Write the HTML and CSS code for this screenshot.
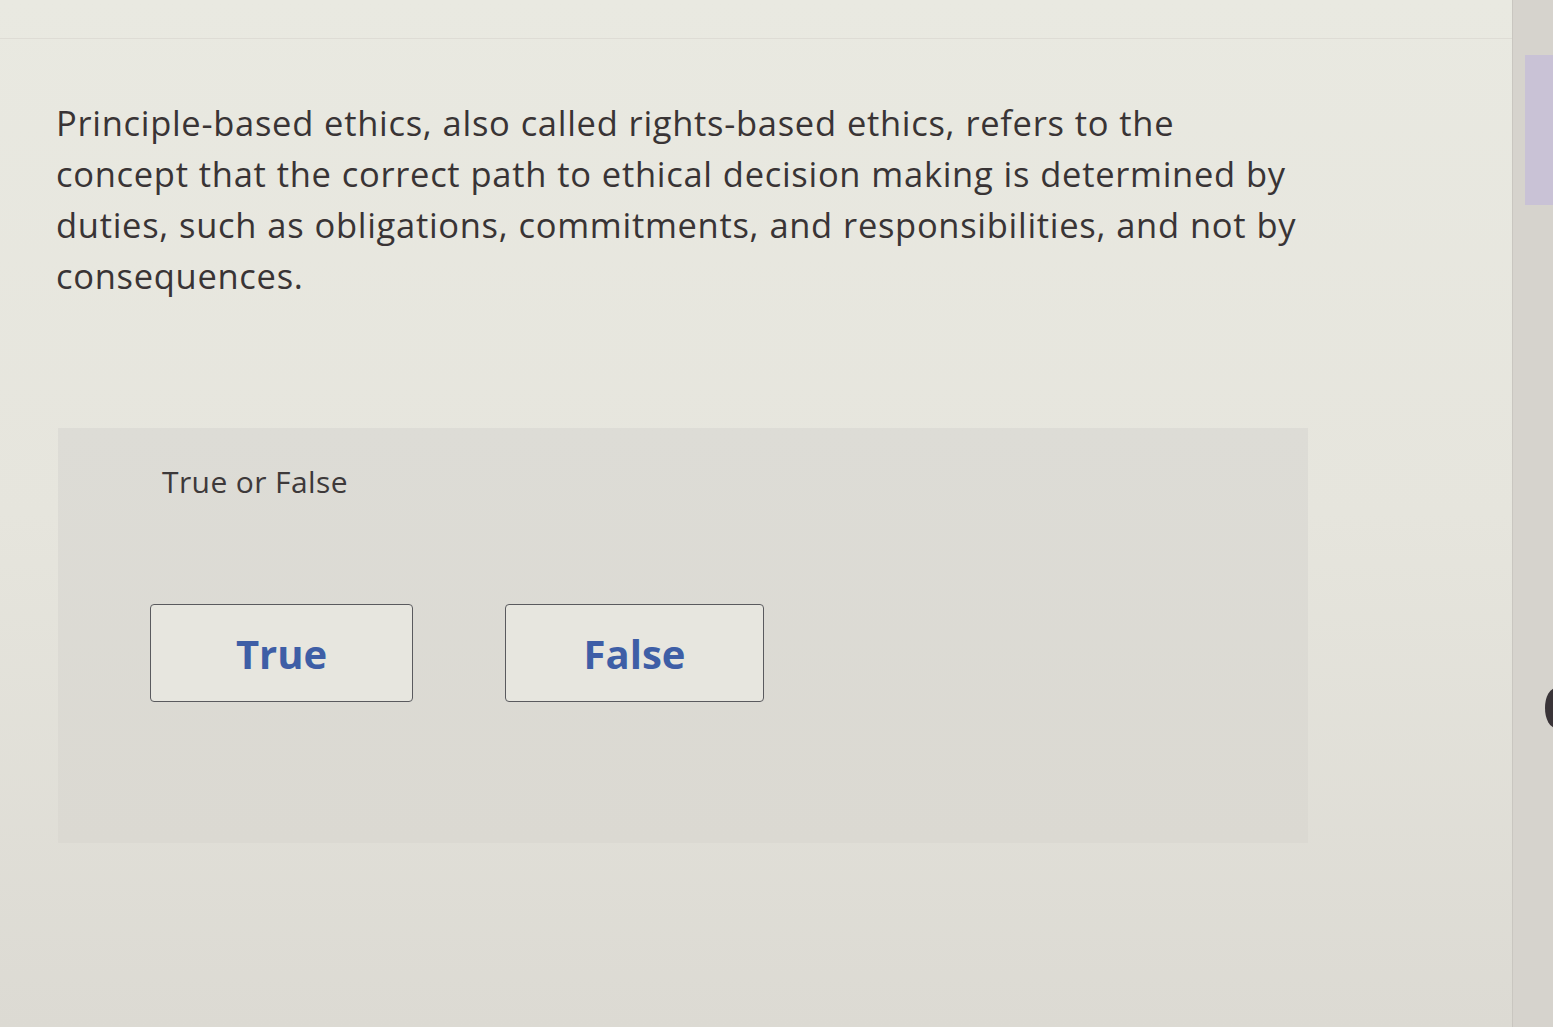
FILE: index.html
```html
<!DOCTYPE html>
<html lang="en">
<head>
<meta charset="utf-8">
<title>True or False</title>
<link rel="stylesheet" href="styles.css">
</head>
<body>
<div class="screen">
  <main class="main">
    <div class="topline"></div>
    <p class="prompt">Principle-based ethics, also called rights-based ethics, refers to the<br>concept that the correct path to ethical decision making is determined by<br>duties, such as obligations, commitments, and responsibilities, and not by<br>consequences.</p>
    <section class="card">
      <div class="card-head">True or False</div>
      <div class="choices">
        <button class="choice">True</button>
        <button class="choice choice-false">False</button>
      </div>
    </section>
  </main>
  <aside class="side">
    <div class="side-band"></div>
    <div class="side-dot"></div>
  </aside>
</div>
</body>
</html>
```
FILE: styles.css
```css
html, body {
  margin: 0;
  padding: 0;
  height: 100%;
}
body {
  background: #e6e5de;
  font-family: "Open Sans", "Liberation Sans", sans-serif;
  overflow: hidden;
}
.screen {
  display: flex;
  height: 1027px;
}
.main {
  width: 1512px;
  background: linear-gradient(180deg, #e9e9e1 0%, #e6e5dd 50%, #dcdad3 100%);
  padding: 0 0 0 56px;
  box-sizing: border-box;
}
.topline {
  height: 38px;
  border-bottom: 1px solid #dedcd5;
  margin-left: -56px;
}
.prompt {
  margin: 58px 0 0 0;
  width: 1300px;
  white-space: nowrap;
  font-size: 34.5px;
  line-height: 51px;
  color: #393435;
  letter-spacing: 0.7px;
  word-spacing: 0.5px;
}
.card {
  margin-top: 127px;
  margin-left: 2px;
  width: 1250px;
  height: 415px;
  background: linear-gradient(180deg, #dddcd6 0%, #dbd9d2 100%);
  display: flex;
  flex-direction: column;
}
.card-head {
  height: 123px;
  box-sizing: border-box;
  padding: 33px 0 0 104px;
  font-size: 30px;
  letter-spacing: 0.4px;
  color: #3d393a;
}
.choices {
  display: flex;
  gap: 92px;
  padding: 53px 0 0 92px;
}
.choice {
  width: 263px;
  height: 98px;
  background: #e7e6df;
  border: 1.5px solid #5a5a5e;
  border-radius: 4px;
  font-family: "Open Sans", "Liberation Sans", sans-serif;
  font-weight: 700;
  font-size: 40px;
  color: #3e5ea6;
  cursor: pointer;
}
.choice-false {
  width: 259px;
}
.side {
  flex: 1;
  background: #d6d3cd;
  position: relative;
  border-left: 1px solid #c9c6c0;
}
.side-band {
  margin-top: 55px;
  height: 150px;
  background: #c9c2d6;
  margin-left: 12px;
}
.side-dot {
  position: absolute;
  right: -14px;
  top: 688px;
  width: 22px;
  height: 40px;
  border-radius: 50%;
  background: #3a3438;
}
```
